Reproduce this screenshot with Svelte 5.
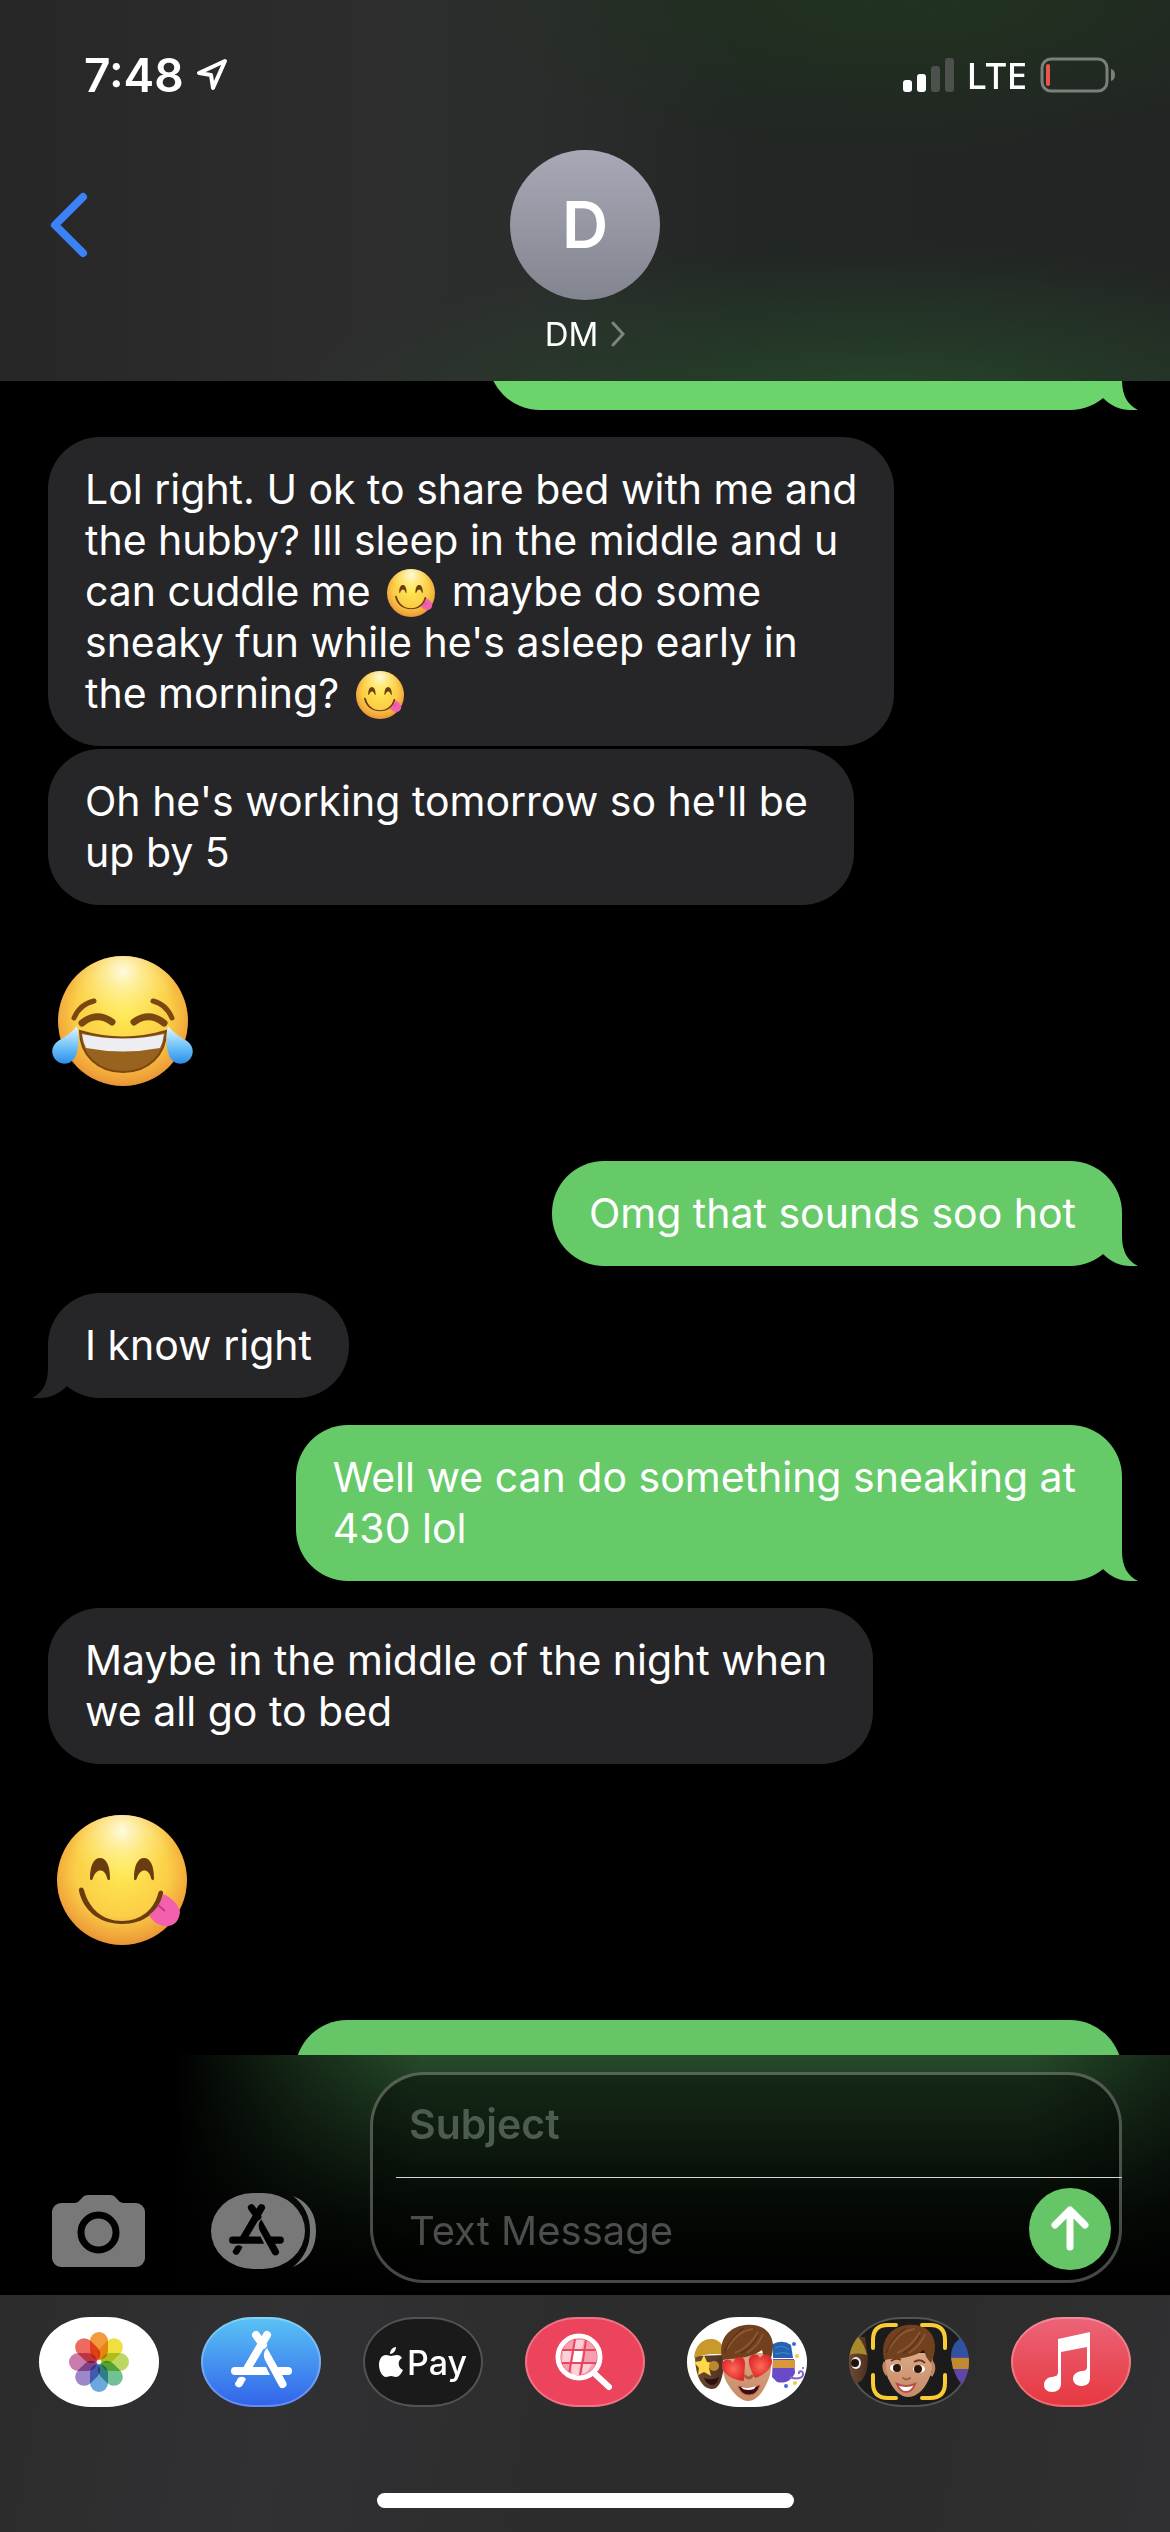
<script>
  const messages = [
    { from: 'me', cut: 'top', text: '' },
    {
      from: 'them',
      text: "Lol right. U ok to share bed with me and\nthe hubby? Ill sleep in the middle and u\ncan cuddle me 😋 maybe do some\nsneaky fun while he's asleep early in\nthe morning? 😋"
    },
    { from: 'them', follows: true, roomy: true, text: "Oh he's working tomorrow so he'll be\nup by 5" },
    { from: 'them', emoji: 'laugh' },
    { from: 'me', tail: true, roomy: true, text: 'Omg that sounds soo hot' },
    { from: 'them', tail: true, text: 'I know right' },
    { from: 'me', tail: true, roomy: true, text: 'Well we can do something sneaking at\n430 lol' },
    { from: 'them', roomy: true, text: 'Maybe in the middle of the night when\nwe all go to bed' },
    { from: 'them', emoji: 'yum' },
    { from: 'me', cut: 'bottom', text: '' }
  ];

  const petals = ['#f29a3c', '#efe040', '#bcd860', '#72c096', '#6aa8de', '#9c88c8', '#cc7cac', '#ee6a60'];

  let subject = '';
  let draft = '';
</script>

{#snippet yum()}
  <circle cx="65" cy="65" r="65" fill="url(#face)" />
  <circle cx="65" cy="65" r="65" fill="url(#shine)" />
  <g fill="#6b3d0e">
    <path d="M33 63C33 50 37 43 43 43s10 7 10 20c0 3-2 3-3 0-2-10-11-10-14 0-1 3-3 3-3 0z" />
    <path d="M77 63c0-13 4-20 10-20s10 7 10 20c0 3-2 3-3 0-2-10-11-10-14 0-1 3-3 3-3 0z" />
    <path d="M22 76c-1-4 4-5 5-1 5 19 19 31 38 31s32-12 36-27c1-5 6-4 5 0-4 18-19 30-41 30-23 0-39-14-43-33z" />
  </g>
  <path d="M106 79C114 82 122 90 123 97C122 106 117 112 108 111C101 110 95 106 92 100C99 95 104 88 106 79z" fill="#f260ae" />
  <path d="M101 90l7 6" stroke="#c93586" stroke-width="2" />
{/snippet}

{#snippet appStore()}
  <g fill="currentColor">
    <path d="M55 18l7 10M66 18L46 52" fill="none" stroke="currentColor" stroke-width="8" stroke-linecap="round" />
    <path d="M34 50h31l4 8H34a4 4 0 0 1 0-8z" />
    <path d="M66 31l19 34a4 4 0 0 1-7 4L64 43q-3-7 2-12z" />
    <path d="M76 50h11a4 4 0 0 1 0 8h-7z" />
    <path d="M35 65l2-4q5-3 8 1l-4 7a4 4 0 0 1-7-3z" />
  </g>
{/snippet}

{#snippet hair()}
  <path d="M35 42C31 22 42 10 58 8c16-2 27 6 28 20 0 9-2 13-4 18-4-4-6-8-7-13-8 6-22 9-34 9-3 0-5 2-6 0z" fill="#70401f" />
  <path d="M40 32C47 20 56 13 66 12M48 36C58 32 66 24 71 15M60 36c8-5 13-11 16-19" fill="none" stroke="#8c5630" stroke-width="2" />
  <path d="M37 36C42 24 49 16 57 11M54 36c8-4 14-11 17-18" fill="none" stroke="#4e2a14" stroke-width="1" />
{/snippet}

<svg class="defs" aria-hidden="true">
  <defs>
    <radialGradient id="face" cx=".5" cy=".42" r=".6">
      <stop offset="0" stop-color="#ffe94f" />
      <stop offset=".6" stop-color="#fbce47" />
      <stop offset=".88" stop-color="#f0a33a" />
      <stop offset="1" stop-color="#e58e34" />
    </radialGradient>
    <radialGradient id="shine" cx=".5" cy=".12" r=".42">
      <stop offset="0" stop-color="#fffff0" stop-opacity=".9" />
      <stop offset="1" stop-color="#fff27a" stop-opacity="0" />
    </radialGradient>
    <linearGradient id="tear" x1="0" y1="0" x2="0" y2="1">
      <stop offset="0" stop-color="#e6f8ff" />
      <stop offset=".6" stop-color="#66bdf8" />
      <stop offset="1" stop-color="#2f8de8" />
    </linearGradient>
    <linearGradient id="skin" x1="0" y1="0" x2="0" y2="1">
      <stop offset="0" stop-color="#dba886" />
      <stop offset="1" stop-color="#c58a66" />
    </linearGradient>
    <linearGradient id="skin-dark" x1="0" y1="0" x2="1" y2="0">
      <stop offset="0" stop-color="#6e4c33" />
      <stop offset="1" stop-color="#4c3020" />
    </linearGradient>
    <radialGradient id="heart">
      <stop offset="0" stop-color="#ff6a5a" />
      <stop offset="1" stop-color="#df2c2c" />
    </radialGradient>
  </defs>
</svg>

<div class="app">
  <header>
    <div class="status">
      <span class="time">7:48</span>
      <svg class="location" viewBox="0 0 32 34" width="32" height="34" aria-hidden="true">
        <path d="M29 3L3 15l12 2 2 13z" fill="none" stroke="#fff" stroke-width="4" stroke-linejoin="round" />
      </svg>
      <svg class="signal" viewBox="0 0 52 36" width="52" height="36" aria-hidden="true">
        <rect x="0" y="23" width="9" height="12" rx="3" fill="#fff" />
        <rect x="14" y="17" width="9" height="18" rx="3" fill="#fff" />
        <rect x="28" y="9" width="9" height="26" rx="3" fill="#4c514d" />
        <rect x="42" y="1" width="9" height="34" rx="3" fill="#4c514d" />
      </svg>
      <span class="network">LTE</span>
      <svg viewBox="0 0 76 36" width="76" height="36" aria-hidden="true">
        <rect x="2" y="2" width="65" height="32" rx="9" fill="none" stroke="#7b807c" stroke-width="3" />
        <rect x="6" y="7" width="4" height="22" rx="2" fill="#ea5545" />
        <path d="M71 12q4 1 4 6t-4 6z" fill="#7b807c" />
      </svg>
    </div>
    <nav>
      <button class="back" aria-label="Back">
        <svg viewBox="0 0 40 66" width="40" height="66">
          <path d="M35 5L7 33l28 28" fill="none" stroke="#3b82f7" stroke-width="8" stroke-linecap="round" stroke-linejoin="round" />
        </svg>
      </button>
      <button class="contact">
        <span class="avatar">D</span>
        <span class="name">
          DM
          <svg viewBox="0 0 14 26" width="14" height="26" aria-hidden="true">
            <path d="M2 2l10 11L2 24" fill="none" stroke="#7d847f" stroke-width="3" stroke-linecap="round" />
          </svg>
        </span>
      </button>
    </nav>
  </header>

  <main>
    {#each messages as m}
      {#if m.emoji === 'laugh'}
        <svg class="big" viewBox="-6 0 142 131" width="142" height="131" role="img" aria-label="face with tears of joy">
          <circle cx="65" cy="65" r="65" fill="url(#face)" />
          <circle cx="65" cy="65" r="65" fill="url(#shine)" />
          <g fill="none" stroke="#7a4710" stroke-width="5" stroke-linecap="round">
            <path d="M16 62q6-14 20-17M114 62q-6-14-19-17" />
            <path d="M24 67q15-12 30-1M76 66q15-11 30 1" stroke-width="7" />
          </g>
          <path d="M22 75q43 13 86 0c0 24-18 41-43 41S22 99 22 75z" fill="#98631e" stroke="#7a4710" stroke-width="2" />
          <path d="M24 78q41 9 82 0-1 8-4 14-37 7-74 0-3-6-4-14z" fill="#eceef2" />
          <path d="M19 70c3 12 1 24-1 29-3 9-13 11-19 6-7-6-6-15 1-20 7-4 13-8 19-15z" fill="url(#tear)" />
          <path d="M110 70c-3 12-1 24 1 29 3 9 13 11 19 6 7-6 6-15-1-20-7-4-13-8-19-15z" fill="url(#tear)" />
        </svg>
      {:else if m.emoji}
        <svg class="big" viewBox="-5 0 142 131" width="142" height="131" role="img" aria-label="face savoring food">
          {@render yum()}
        </svg>
      {:else}
        <div class="bubble {m.from} {m.cut ?? ''}" class:follows={m.follows} class:roomy={m.roomy}>
          {#each m.text.split('\n') as line}
            <p>{#each line.split('😋') as part, i}{#if i}<svg class="inline" viewBox="0 0 130 130" width="48" height="48" role="img" aria-label="face savoring food">{@render yum()}</svg>{/if}<span>{part}</span>{/each}</p>
          {/each}
          {#if m.tail || m.cut === 'top'}
            <svg class="tail" viewBox="0 0 52 52" width="52" height="52" aria-hidden="true">
              <path d="M0 0h36v22c0 16 6 25 16 30-3 0-6 0-8 0-10 0-19-4-27-12L0 20z" fill="currentColor" />
            </svg>
          {/if}
        </div>
      {/if}
    {/each}
  </main>

  <form class="compose" on:submit|preventDefault>
    <button type="button" class="camera" aria-label="Camera">
      <svg viewBox="0 0 93 72" width="93" height="72">
        <path d="M9 8h14q3 0 5-3l2-2q2-3 6-3h22q4 0 6 3l2 2q2 3 5 3h13a9 9 0 0 1 9 9v46a9 9 0 0 1-9 9H9a9 9 0 0 1-9-9V17a9 9 0 0 1 9-9z" fill="#787878" />
        <circle cx="46.500" cy="37.500" r="17.500" fill="none" stroke="#000" stroke-width="7" />
      </svg>
    </button>
    <button type="button" class="apps" aria-label="Apps">
      <svg viewBox="0 0 105 76" width="105" height="76">
        <rect width="94" height="76" rx="42" ry="38" fill="#787878" />
        <path d="M82 3q23 9 23 35T82 74q17-14 17-36T82 3z" fill="#787878" />
        <g transform="translate(-9 -1.500) scale(.9)">{@render appStore()}</g>
      </svg>
    </button>
    <div class="field">
      <input class="subject" aria-label="Subject" placeholder="Subject" bind:value={subject} />
      <div class="line">
        <input aria-label="Text Message" placeholder="Text Message" bind:value={draft} />
        <button class="send" aria-label="Send">
          <svg viewBox="0 0 82 82" width="82" height="82">
            <path d="M41 23v36M26 37l15-15 15 15" fill="none" stroke="#fff" stroke-width="7" stroke-linecap="round" stroke-linejoin="round" />
          </svg>
        </button>
      </div>
    </div>
  </form>

  <footer>
    <div class="drawer">
      <button class="pill photos" aria-label="Photos">
        <svg viewBox="0 0 120 90">
          {#each petals as color, i}
            <rect class="petal" x="51" y="15" width="18" height="28" rx="9" fill={color} transform="rotate({i * 45} 60 45)" />
          {/each}
        </svg>
      </button>
      <button class="pill store" aria-label="App Store">
        <svg viewBox="0 0 120 90">{@render appStore()}</svg>
      </button>
      <button class="pill pay">
        <svg viewBox="0 0 24 30" width="24" height="30" aria-hidden="true">
          <path d="M17 0c0 4-3 7-6 7 0-4 3-7 6-7zM12 9c2 0 3-1 6-1 2 0 4 1 5 3-5 3-4 10 1 12-2 4-4 7-7 7-2 0-3-1-5-1s-3 1-5 1C3 30 0 23 0 18 0 12 3 8 7 8c2 0 4 1 5 1z" fill="#fff" />
        </svg>
        <span>Pay</span>
      </button>
      <button class="pill images" aria-label="#images">
        <svg viewBox="0 0 120 90">
          <circle cx="54" cy="40" r="18" fill="#f5a0ae" />
          <path d="M49 34h9l-2 11h-9z" fill="#fff" />
          <path d="M38 34h9l-2 11h-8zM50 23h9l-2 9h-8zM46 47h9l-1 11h-7zM58 47h9l-5 8-5 2z" fill="#fbd0d8" />
          <path d="M36 33h36M36 46h35M50 22q-3 19-6 35M61 22q-2 19-6 36" fill="none" stroke="#eb445c" stroke-width="2" />
          <circle cx="54" cy="40" r="21" fill="none" stroke="#fff" stroke-width="5" />
          <path d="M70 57l14 13" stroke="#fff" stroke-width="6" stroke-linecap="round" />
        </svg>
      </button>
      <button class="pill stickers" aria-label="Memoji Stickers">
        <svg viewBox="0 0 120 90">
          <path d="M8 39c0 18 6 33 17 33 8 0 12-12 12-34z" fill="url(#skin-dark)" />
          <path d="M7 41C8 28 16 21 26 22c8 1 12 9 12 16-10-2-21-1-31 3z" fill="#c79a2a" />
          <path d="M17 38l3 7 8 1-6 5 2 8-7-4-6 3 1-7-5-6 7-1z" fill="#ffd84a" />
          <circle cx="27" cy="49" r="5" fill="#b98a2c" />
          <path d="M17 61q9 3 15-1-2 8-7 8t-8-7z" fill="#2a1010" />
          <path d="M86 42h21l1 14c-4 8-10 11-18 9l-5-5z" fill="#6a4ac6" />
          <path d="M86 27q10-5 18 1l2 13H86z" fill="#2562b0" />
          <path d="M88 31q8-4 14 2M88 37q8-3 15 0" fill="none" stroke="#3f8cd0" stroke-width="1" />
          <path d="M86 43h22v8H86z" fill="#d9973c" />
          <path d="M103 60c7 3 14 1 13-4-1-3-5-2-4 1" fill="none" stroke="#8860d0" stroke-width="2" />
          <g fill="#4668d8"><circle cx="107" cy="27" r="2" /><circle cx="99" cy="69" r="2" /><circle cx="116" cy="51" r="1" /></g>
          <g fill="#f0ca40"><circle cx="110" cy="39" r="2" /><circle cx="108" cy="66" r="2" /></g>
          <path d="M37 36h46c3 14 0 24-4 32-5 10-11 16-18 16s-14-7-19-15c-6-9-8-18-5-33z" fill="url(#skin)" />
          {@render hair()}
          <path d="M58 59q4 4 7 0" fill="none" stroke="#a35e3e" stroke-width="3" stroke-linecap="round" />
          <path d="M51 69q12 4 22-1-3 10-11 10t-11-9z" fill="#3a0d10" stroke="#c65a52" stroke-width="1" />
          <path d="M54 70q8 2 15-1l-2 3q-6 2-11 0z" fill="#fff" />
          <path d="M57 64C46 63 35 57 35 49c0-7 8-9 11-3 2-8 12-8 12 0 0 6-1 11-1 18z" fill="url(#heart)" />
          <path d="M68 61c-3-6-7-13-6-19 2-6 9-6 11-1 3-6 12-4 12 3 0 8-8 14-17 17z" fill="url(#heart)" />
        </svg>
      </button>
      <button class="pill memoji" aria-label="Memoji">
        <svg viewBox="0 0 120 90">
          <path d="M0 20h16l3 20c0 15-4 24-11 26L0 68z" fill="url(#skin-dark)" />
          <path d="M0 15q13 3 18 23Q8 35 0 38z" fill="#a8892c" />
          <ellipse cx="7" cy="46" rx="5" ry="6" fill="#eee" /><circle cx="6" cy="46" r="4" fill="#20130d" />
          <path d="M102 40h18v30q-14-2-18-30z" fill="#6245a8" />
          <path d="M102 40q0-18 18-22v22z" fill="#3152a0" />
          <path d="M102 41h18v11h-16z" fill="#c08b30" />
          <path d="M37 36h46c2 12 0 20-4 28-5 10-12 16-20 16S45 73 41 65c-5-9-6-17-4-29z" fill="url(#skin)" />
          <path d="M36 45q-3 6 2 13M83 45q4 6-1 14" fill="none" stroke="#c38560" stroke-width="3" />
          {@render hair()}
          <path d="M42 44q5-4 10-1M65 45q6-4 11 1" fill="none" stroke="#6a3d20" stroke-width="2" />
          <g fill="#fff"><ellipse cx="47" cy="51" rx="6" ry="4" /><ellipse cx="70" cy="52" rx="6" ry="4" /></g>
          <g fill="#2a160c"><circle cx="48" cy="51" r="4" /><circle cx="69" cy="52" r="4" /></g>
          <path d="M54 61q4 3 7 0" fill="none" stroke="#a35e3e" stroke-width="2" stroke-linecap="round" />
          <path d="M48 67q9 4 18 0-3 8-9 8t-9-8z" fill="#fff" stroke="#b84e48" stroke-width="2" />
          <path d="M47 8h-8Q24 8 24 23v8M73 8h8q15 0 15 15v8M47 81h-8q-15 0-15-15v-8M73 81h8q15 0 15-15v-8" fill="none" stroke="#fbcb33" stroke-width="4" stroke-linecap="round" />
        </svg>
      </button>
      <button class="pill music" aria-label="Music">
        <svg viewBox="0 0 120 90">
          <path d="M47 22l32-7v46c0 6-4 8-9 8-4 0-8-3-8-7 0-5 4-7 8-8 4 0 6-1 6-4V30l-26 5v32c0 5-4 8-9 8s-8-3-8-7c0-5 4-8 8-8 4-1 6-1 6-5z" fill="#fff" />
        </svg>
      </button>
    </div>
    <div class="home"></div>
  </footer>
</div>

<style>
  :global(body) {
    margin: 0;
    background: #000;
  }

  .app {
    display: flex;
    flex-direction: column;
    height: 100vh;
    overflow: hidden;
    background: #000;
    color: #fff;
    font-family: Inter, "Liberation Sans", sans-serif;
  }

  .defs {
    position: absolute;
    width: 0;
    height: 0;
  }

  svg {
    display: block;
    flex-shrink: 0;
  }

  button {
    padding: 0;
    border: none;
    background: none;
    color: inherit;
    font-family: inherit;
    cursor: pointer;
  }

  header {
    padding-bottom: 27px;
    background:
      radial-gradient(ellipse 50% 42% at 75% 106%, #26452a, transparent),
      radial-gradient(ellipse 40% 40% at 78% 0%, #20331f, transparent),
      linear-gradient(to right, #272728, #2d2d2e 30%, #2b2d2c 46%, #222624 64%, #222423);
  }

  .status {
    display: flex;
    align-items: center;
    padding: 48px 54px 0 84px;
  }

  .time {
    font-size: 46px;
    line-height: 54px;
    font-weight: 600;
  }

  .location {
    margin-left: 12px;
  }

  .signal {
    margin-left: auto;
  }

  .network {
    margin: 0 13px 0 12px;
    font-family: "Noto Sans", sans-serif;
    font-size: 37px;
    line-height: 54px;
    font-weight: 500;
  }

  nav {
    display: grid;
    grid-template-columns: 1fr auto 1fr;
    align-items: start;
    padding: 48px 48px 0;
  }

  .back {
    justify-self: start;
    margin-top: 42px;
  }

  .contact {
    display: flex;
    flex-direction: column;
    align-items: center;
    gap: 14px;
  }

  .avatar {
    width: 150px;
    border-radius: 50%;
    background: linear-gradient(#a7a9b6, #82858f);
    font-size: 64px;
    line-height: 150px;
    font-weight: 600;
  }

  .name {
    display: flex;
    align-items: center;
    gap: 13px;
    font-size: 33px;
    line-height: 40px;
  }

  main {
    flex: 1;
    min-height: 0;
    overflow: hidden;
    display: flex;
    flex-direction: column;
    align-items: flex-start;
    padding: 0 48px;
  }

  .bubble {
    position: relative;
    flex-shrink: 0;
    box-sizing: border-box;
    margin-top: 27px;
    padding: 27px 37px;
    border-radius: 52px;
  }

  .bubble p {
    height: 51px;
    margin: 0;
    font-size: 41px;
    line-height: 51px;
    white-space: pre;
  }

  .them {
    background: #262629;
    color: #fff;
  }

  .me {
    align-self: flex-end;
    background: #67ca69;
  }

  .follows {
    margin-top: 3px;
  }

  .roomy {
    padding-right: 46px;
  }

  .top {
    width: 59%;
    margin-top: -76px;
    background: #6bd56b;
  }

  .bottom {
    width: 77%;
    margin-top: 74px;
    background: #66c667;
  }

  .tail {
    position: absolute;
    right: -16px;
    bottom: 0;
    color: #67ca69;
  }

  .top .tail {
    color: #6bd56b;
  }

  .them .tail {
    right: auto;
    left: -16px;
    color: #262629;
    transform: scaleX(-1);
  }

  .inline {
    display: inline-block;
    margin: -4px 5px;
    vertical-align: -7px;
  }

  .big {
    margin-top: 51px;
    margin-left: 4px;
  }

  .big + .me {
    margin-top: 74px;
  }

  .compose {
    display: flex;
    align-items: flex-end;
    padding: 17px 48px 12px 52px;
    background:
      linear-gradient(to bottom, transparent, rgba(0, 0, 0, 0.8) 65%, #000 95%),
      linear-gradient(to right, #000 15%, #162b18 26%, #264a29 36%, #264a29 88%, #142616);
  }

  .camera {
    margin: 0 66px 16px 0;
  }

  .apps {
    margin: 0 54px 14px 0;
    color: #000;
  }

  .field {
    flex: 1;
    min-width: 0;
    border: 3px solid rgba(255, 255, 255, 0.28);
    border-radius: 54px;
    background: rgba(0, 0, 0, 0.38);
  }

  .line {
    display: flex;
    align-items: center;
    margin: 0 -3px 0 23px;
    border-top: 1px solid #d4d8d4;
  }

  input {
    box-sizing: border-box;
    width: 100%;
    height: 102px;
    min-width: 0;
    padding: 2px 13px 0;
    border: none;
    outline: none;
    background: none;
    color: #fff;
    font-family: inherit;
    font-size: 40px;
  }

  .subject {
    padding: 0 36px 4px;
    font-size: 41px;
    font-weight: 600;
  }

  input::placeholder {
    color: #4c4d4c;
    opacity: 1;
  }

  .subject::placeholder {
    color: #4c5c4e;
  }

  .send {
    margin-right: 11px;
    border-radius: 50%;
    background: #66c667;
  }

  footer {
    padding: 22px 39px 24px;
    background: linear-gradient(100deg, #2c2c2c, #313134 24%, #2c2c2c 50%, #2c2c2c 75%, #303032);
  }

  .drawer {
    display: flex;
    justify-content: space-between;
  }

  .pill {
    display: flex;
    align-items: center;
    justify-content: center;
    width: 120px;
    height: 90px;
    overflow: hidden;
    border-radius: 52px / 45px;
    box-shadow: inset 0 0 0 2px rgba(255, 255, 255, 0.25);
  }

  .pill > svg:only-child {
    width: 120px;
    height: 90px;
  }

  .photos,
  .stickers {
    background: #fff;
  }

  .petal {
    mix-blend-mode: multiply;
  }

  .store {
    background: linear-gradient(#5ac4f5, #3162ea);
  }

  .pay {
    gap: 4px;
    background: #1a1a1a;
    font-size: 34px;
    font-weight: 500;
  }

  .images {
    background: #eb445c;
  }

  .memoji {
    background: #1b1b1b;
  }

  .music {
    background: linear-gradient(#ec6478, #e6373f);
  }

  .home {
    width: 417px;
    height: 15px;
    margin: 86px auto 0;
    border-radius: 8px;
    background: #fff;
  }
</style>
